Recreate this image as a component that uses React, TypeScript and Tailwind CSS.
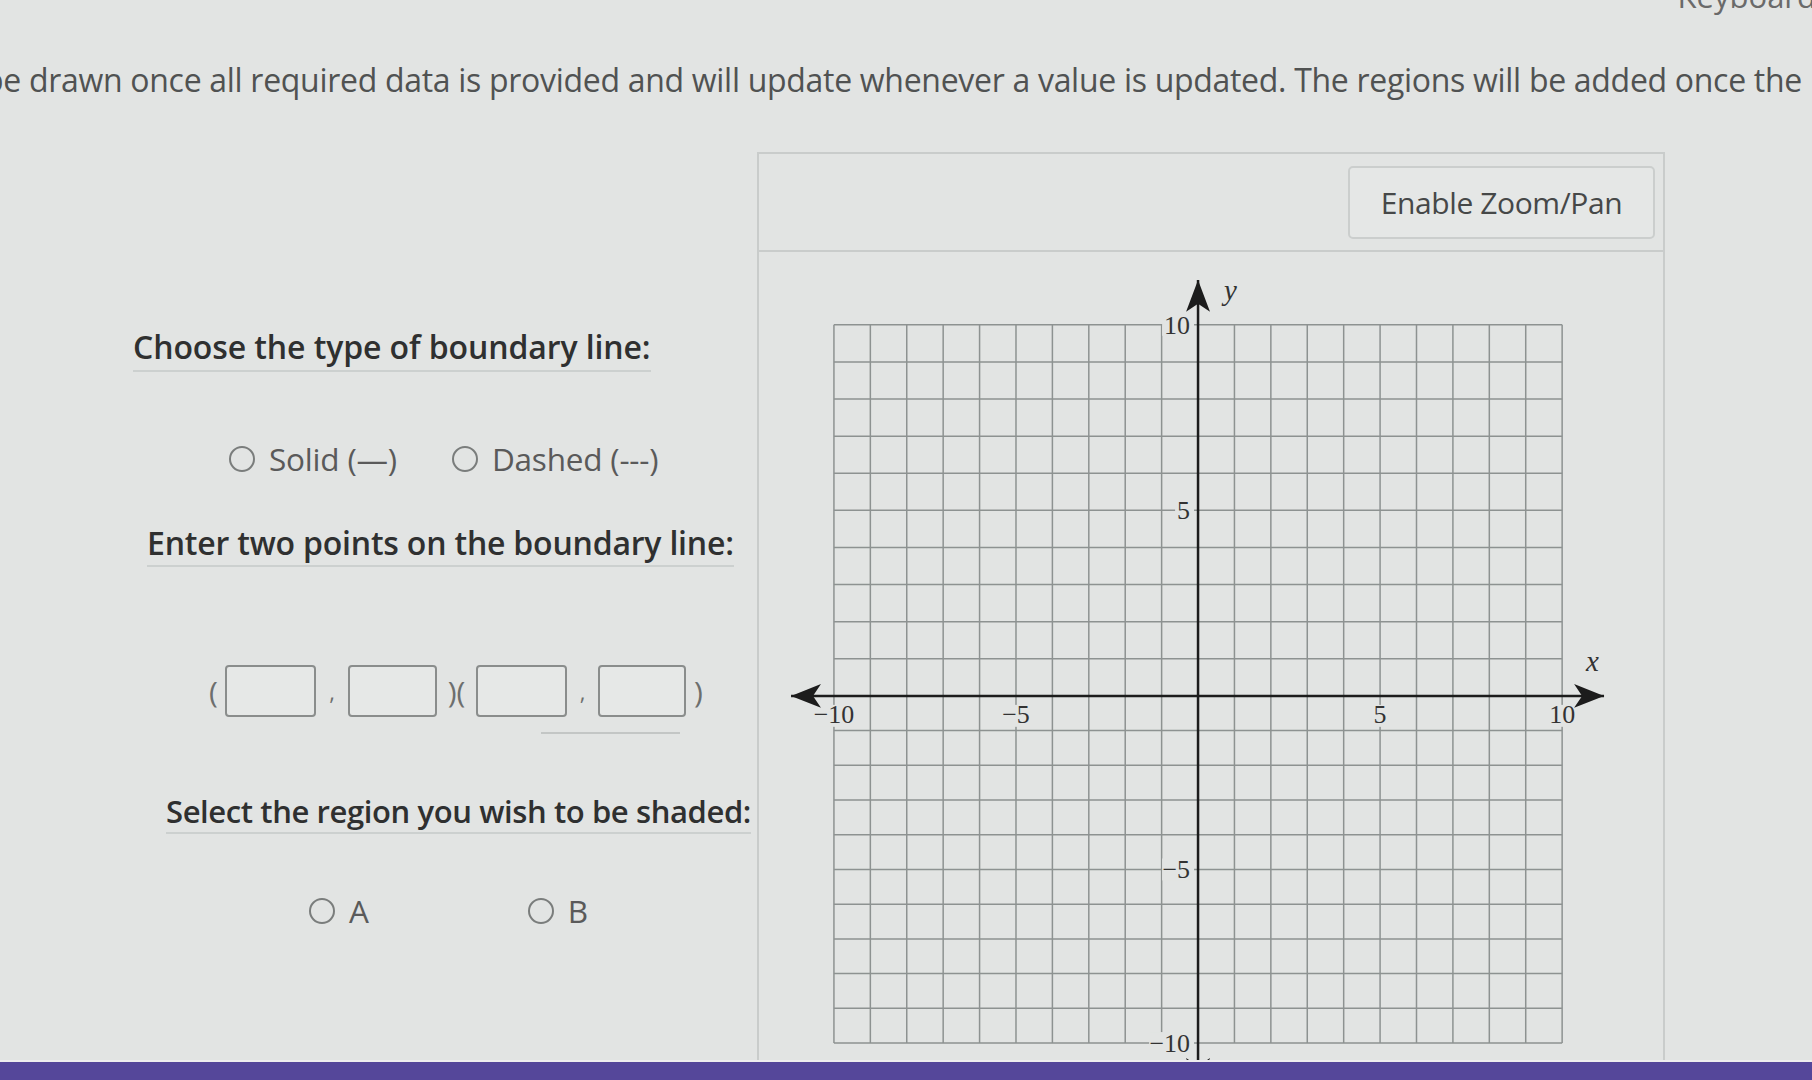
import React from "react";

const GRID_LEFT = 74;
const CELL_W = 36.5;
const GRID_TOP = 73;
const ROW_TOP = 37.2;
const ROW_BOT = 34.8;

const colX = (i: number) => GRID_LEFT + i * CELL_W;
const rowY = (i: number) => (i <= 10 ? GRID_TOP + i * ROW_TOP : GRID_TOP + 10 * ROW_TOP + (i - 10) * ROW_BOT);

const BG = "#e2e4e3";

function Graph() {
  const ox = colX(10);
  const oy = rowY(10);
  const left = colX(0);
  const right = colX(20);
  const top = rowY(0);
  const bottom = rowY(20);
  const lines = Array.from({ length: 21 }, (_, i) => i);
  const serif = "'Liberation Serif', 'Times New Roman', serif";
  const yLabels: [string, number][] = [
    ["10", rowY(0)],
    ["5", rowY(5)],
    ["\u22125", rowY(15)],
    ["\u221210", rowY(20)],
  ];
  const xLabels: [string, number][] = [
    ["\u221210", colX(0)],
    ["\u22125", colX(5)],
    ["5", colX(15)],
    ["10", colX(20)],
  ];
  return (
    <svg width="908" height="810" viewBox="0 0 908 810" className="block">
      {lines.map((i) => (
        <line key={"v" + i} x1={colX(i)} y1={top} x2={colX(i)} y2={bottom} stroke="#8d9291" strokeWidth="1.5" />
      ))}
      {lines.map((i) => (
        <line key={"h" + i} x1={left} y1={rowY(i)} x2={right} y2={rowY(i)} stroke="#8d9291" strokeWidth="1.5" />
      ))}
      {yLabels.map(([t, y]) => (
        <rect key={"yb" + t} x={ox - 10 - t.length * 13} y={y - 11} width={t.length * 13 + 6} height={22} fill={BG} />
      ))}
      {xLabels.map(([t, x]) => (
        <rect key={"xb" + t} x={x - t.length * 6.5 - 2} y={oy + 9} width={t.length * 13 + 4} height={22} fill={BG} />
      ))}
      <line x1={31} y1={oy} x2={846} y2={oy} stroke="#1c1c1c" strokeWidth="2.5" />
      <line x1={ox} y1={28} x2={ox} y2={830} stroke="#1c1c1c" strokeWidth="2.5" />
      <path d={`M846 ${oy} L816 ${oy - 12} L824 ${oy} L816 ${oy + 12} Z`} fill="#1c1c1c" />
      <path d={`M31 ${oy} L61 ${oy - 12} L53 ${oy} L61 ${oy + 12} Z`} fill="#1c1c1c" />
      <path d={`M${ox} 28 L${ox - 12} 60 L${ox} 52 L${ox + 12} 60 Z`} fill="#1c1c1c" />
      <path d={`M${ox} 840 L${ox - 12} 808 L${ox} 816 L${ox + 12} 808 Z`} fill="#1c1c1c" />
      {yLabels.map(([t, y]) => (
        <text key={"y" + t} x={ox - 8} y={y + 9} textAnchor="end" fontFamily={serif} fontSize="26" fill="#333">
          {t}
        </text>
      ))}
      {xLabels.map(([t, x]) => (
        <text key={"x" + t} x={x} y={oy + 27} textAnchor="middle" fontFamily={serif} fontSize="26" fill="#333">
          {t}
        </text>
      ))}
      <text x={ox + 26} y={48} fontFamily={serif} fontStyle="italic" fontSize="29" fill="#333">
        y
      </text>
      <text x={828} y={420} fontFamily={serif} fontStyle="italic" fontSize="29" fill="#333">
        x
      </text>
    </svg>
  );
}

function Radio({ label, className }: { label: string; className?: string }) {
  return (
    <div className={"flex items-center " + (className ?? "")}>
      <span className="w-[26px] h-[26px] rounded-full border-2 border-[#7a7d7c] shrink-0" />
      <span className="ml-[14px] text-[31.5px] leading-[40px] text-[#5a5a5a] tracking-[-0.2px] whitespace-nowrap">{label}</span>
    </div>
  );
}

function Box({ w }: { w: string }) {
  return <span className={"h-[52px] rounded-[4px] border-2 border-[#8a8d8c] bg-[#e6e8e7] shrink-0 " + w} />;
}

export default function App() {
  return (
    <div className="w-[1812px] h-[1080px] overflow-hidden bg-[#e2e4e3] font-['Open_Sans',sans-serif] flex flex-col">
      <div className="h-[150px] shrink-0 relative">
        <div className="absolute right-[-4px] top-[-27px] text-[31px] text-[#6a6a6a]">Keyboard</div>
        <p className="pt-[58px] -ml-[16px] whitespace-nowrap text-[32px] leading-[44px] text-[#505252] tracking-[-0.3px]">
          be drawn once all required data is provided and will update whenever a value is updated. The regions will be added once the
        </p>
      </div>

      <div className="flex h-[910px] shrink-0 overflow-hidden">
        <div className="w-[757px] shrink-0 flex flex-col items-start">
          <div className="mt-[177px] ml-[133px] whitespace-nowrap text-[32px] leading-[39px] font-semibold text-[#2f3030] tracking-[-0.1px] pb-[4px] border-b-2 border-[#ccd0cf]">
            Choose the type of boundary line:
          </div>
          <div className="mt-[67px] ml-[229px] flex items-center">
            <Radio label="Solid (—)" />
            <Radio label="Dashed (---)" className="ml-[55px]" />
          </div>
          <div className="mt-[44px] ml-[147px] whitespace-nowrap text-[32px] leading-[39px] font-semibold text-[#2f3030] tracking-[-0.2px] pb-[3px] border-b-2 border-[#ccd0cf]">
            Enter two points on the boundary line:
          </div>
          <div className="mt-[98px] ml-[209px] flex items-center text-[30px] text-[#6d6f6e]">
            <span className="w-[16px]">(</span>
            <Box w="w-[91px]" />
            <span className="w-[32px] text-center text-[22px]">,</span>
            <Box w="w-[89px]" />
            <span className="w-[39px] text-center">)(</span>
            <Box w="w-[91px]" />
            <span className="w-[31px] text-center text-[22px]">,</span>
            <Box w="w-[88px]" />
            <span className="pl-[8px]">)</span>
          </div>
          <div className="mt-[15px] ml-[541px] h-[2px] w-[139px] bg-[#c3c6c5]" />
          <div className="mt-[58px] ml-[166px] whitespace-nowrap text-[31px] leading-[39px] font-semibold text-[#2f3030] tracking-[-0.4px] pb-[1px] border-b-2 border-[#ccd0cf]">
            Select the region you wish to be shaded:
          </div>
          <div className="mt-[57px] ml-[309px] flex items-center">
            <Radio label="A" />
            <Radio label="B" className="ml-[159px]" />
          </div>
        </div>

        <div className="mt-[2px] w-[908px] shrink-0 border-l-2 border-t-2 border-r-2 border-[#c9cccb] flex flex-col">
          <div className="h-[98px] shrink-0 border-b-2 border-[#c9cccb] flex justify-end items-start pt-[12px] pr-[8px]">
            <button className="w-[307px] h-[73px] rounded-[5px] border-2 border-[#cbcecd] bg-[#e5e7e6] text-[30px] text-[#464848] tracking-[-0.4px]">
              Enable Zoom/Pan
            </button>
          </div>
          <Graph />
        </div>
      </div>

      <div className="h-[20px] shrink-0 bg-[#55479a] border-t-2 border-[#eeeeee]" />
    </div>
  );
}
